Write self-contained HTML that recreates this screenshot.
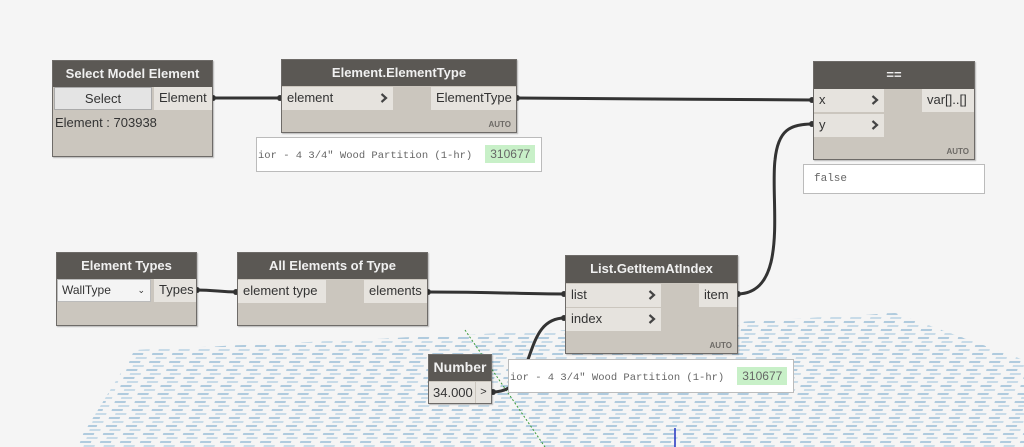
<!DOCTYPE html>
<html><head><meta charset="utf-8"><style>
*{box-sizing:border-box;margin:0;padding:0}
body{width:1024px;height:447px;background:#f5f5f5;position:relative;overflow:hidden;font-family:"Segoe UI","Liberation Sans","DejaVu Sans",sans-serif;font-size:13px;color:#333}
.n{position:absolute;background:#cbc6be;border:1px solid #6e6b68;box-shadow:1px 1px 1px rgba(0,0,0,.25)}
.h{position:absolute;left:0;right:0;top:0;background:#5b5854;color:#f0f0f0;font-weight:bold;text-align:center;font-size:13px}
.p{position:absolute;background:#e6e3de;line-height:22px;padding-left:5px;font-size:13px;color:#333}
.ar{position:absolute;right:5px;top:6px;width:8px;height:10px}
.auto{position:absolute;right:5px;bottom:3px;font-size:8px;font-weight:bold;color:#6d6a66}
.tt{position:absolute;background:#fff;border:1px solid #bbb;font-family:"Liberation Mono",monospace;font-size:10.5px;color:#666;white-space:nowrap;overflow:hidden;padding-left:1px}
.g{background:#c8f0c8;padding:2px 5px;margin-left:13px;font-size:12px;font-family:"Segoe UI","Liberation Sans",sans-serif}
svg{position:absolute;left:0;top:0}
</style></head><body>
<svg width="1024" height="447">
<defs>
<pattern id="pt" width="20" height="8" patternUnits="userSpaceOnUse" patternTransform="skewX(-20)">
<line x1="1" y1="2" x2="12" y2="2" stroke="#8fb7d2" stroke-width="1.4"/>
<line x1="6" y1="6" x2="17" y2="6" stroke="#a9c9de" stroke-width="1.2"/>
</pattern>
<symbol id="chev" viewBox="0 0 8 10"><path d="M1.5,1 L6,5 L1.5,9" stroke="#444" stroke-width="2.2" fill="none"/></symbol>
</defs>
<polygon points="135,350 740,322 895,313 1024,360 1024,447 75,447" fill="url(#pt)"/>
<line x1="465" y1="330" x2="545" y2="447" stroke="#3a9a3a" stroke-width="1" stroke-dasharray="2,2"/>
<line x1="675" y1="428" x2="675" y2="447" stroke="#2030c0" stroke-width="1.5"/>
<g stroke="#333" stroke-width="3" fill="none">
<path d="M212,98 L281,98"/>
<path d="M516,98 C650,98 700,100 813,100"/>
<path d="M737,294 C790,294 770,200 775,160 C778,130 790,124 813,124"/>
<path d="M196,290 C215,290 220,292 237,292"/>
<path d="M427,292 C500,292 520,294 565,294"/>
<path d="M492,392 C540,392 520,318 565,318"/>
</g>
<g fill="#333"><circle cx="213" cy="98" r="3"/><circle cx="280" cy="98" r="3"/><circle cx="517" cy="98" r="3"/><circle cx="812" cy="100" r="3"/><circle cx="812" cy="124" r="3"/><circle cx="738" cy="294" r="3"/><circle cx="197" cy="290" r="3"/><circle cx="236" cy="292" r="3"/><circle cx="428" cy="292" r="3"/><circle cx="564" cy="294" r="3"/><circle cx="564" cy="318" r="3"/><circle cx="493" cy="392" r="3"/></g>
</svg>

<div class="n" style="left:52px;top:60px;width:161px;height:97px">
<div class="h" style="height:26px;line-height:25px">Select Model Element</div>
<div style="position:absolute;left:1px;top:26px;width:98px;height:23px;background:#e4e4e4;border:1px solid #aaa;text-align:center;line-height:21px">Select</div>
<div class="p" style="left:101px;top:26px;width:58px;height:23px">Element</div>
<div style="position:absolute;left:2px;top:54px">Element : 703938</div>
</div>

<div class="n" style="left:281px;top:59px;width:236px;height:74px">
<div class="h" style="height:26px;line-height:25px">Element.ElementType</div>
<div class="p" style="left:0;top:27px;width:111px;height:23px">element<svg class="ar" style="left:auto"><use href="#chev"/></svg></div>
<div class="p" style="left:149px;top:27px;width:85px;height:23px">ElementType</div>
<div class="auto">AUTO</div>
</div>
<div class="tt" style="left:256px;top:137px;width:286px;height:35px;line-height:33px">ior - 4 3/4" Wood Partition (1-hr)<span class="g">310677</span></div>

<div class="n" style="left:813px;top:61px;width:162px;height:99px">
<div class="h" style="height:27px;line-height:26px">==</div>
<div class="p" style="left:0;top:27px;width:70px;height:23px">x<svg class="ar" style="left:auto"><use href="#chev"/></svg></div>
<div class="p" style="left:0;top:52px;width:70px;height:23px">y<svg class="ar" style="left:auto"><use href="#chev"/></svg></div>
<div class="p" style="left:108px;top:27px;width:52px;height:23px">var[]..[]</div>
<div class="auto">AUTO</div>
</div>
<div class="tt" style="left:803px;top:164px;width:182px;height:30px;line-height:28px;padding-left:10px;font-size:11px">false</div>

<div class="n" style="left:56px;top:252px;width:141px;height:74px">
<div class="h" style="height:26px;line-height:25px">Element Types</div>
<div style="position:absolute;left:0;top:26px;width:94px;height:23px;background:#f4f4f4;border:1px solid #bbb;line-height:21px;padding-left:4px;font-size:12px">WallType<span style="position:absolute;right:5px;font-size:9px">⌄</span></div>
<div class="p" style="left:97px;top:26px;width:42px;height:23px">Types</div>
</div>

<div class="n" style="left:237px;top:252px;width:191px;height:74px">
<div class="h" style="height:26px;line-height:25px">All Elements of Type</div>
<div class="p" style="left:0;top:27px;width:88px;height:23px">element type</div>
<div class="p" style="left:126px;top:27px;width:63px;height:23px">elements</div>
</div>

<div class="n" style="left:565px;top:255px;width:173px;height:99px">
<div class="h" style="height:27px;line-height:26px">List.GetItemAtIndex</div>
<div class="p" style="left:0;top:28px;width:95px;height:23px">list<svg class="ar" style="left:auto"><use href="#chev"/></svg></div>
<div class="p" style="left:0;top:52px;width:95px;height:23px">index<svg class="ar" style="left:auto"><use href="#chev"/></svg></div>
<div class="p" style="left:133px;top:28px;width:38px;height:23px">item</div>
<div class="auto">AUTO</div>
</div>

<div class="n" style="left:428px;top:354px;width:64px;height:50px">
<div class="h" style="height:26px;line-height:25px;font-size:14px">Number</div>
<div style="position:absolute;left:0;top:27px;width:46px;height:21px;background:#e6e3de;line-height:21px;padding-left:4px">34.000</div>
<div style="position:absolute;left:47px;top:27px;width:15px;height:21px;background:#e6e3de;line-height:21px;text-align:center;font-size:11px">&gt;</div>
</div>
<div class="tt" style="left:508px;top:359px;width:286px;height:34px;line-height:32px">ior - 4 3/4" Wood Partition (1-hr)<span class="g">310677</span></div>
</body></html>
